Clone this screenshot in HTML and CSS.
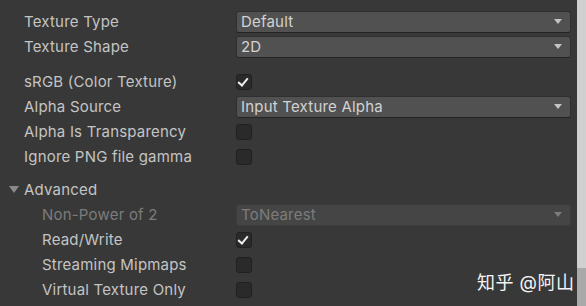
FILE: index.html
```html
<!DOCTYPE html>
<html lang="en">
<head>
    <meta charset="UTF-8">
    <meta name="viewport" content="width=device-width, initial-scale=1.0">
    <title>Texture Import Settings</title>
    <link rel="stylesheet" href="styles.css">
</head>
<body>
    <div class="inspector">
        <div class="row">
            <span class="label">Texture Type</span>
            <div class="popup"><span>Default</span><i class="arrow"></i></div>
        </div>
        <div class="row">
            <span class="label">Texture Shape</span>
            <div class="popup"><span>2D</span><i class="arrow"></i></div>
        </div>

        <div class="row spaced">
            <span class="label">sRGB (Color Texture)</span>
            <div class="toggle checked"></div>
        </div>
        <div class="row">
            <span class="label">Alpha Source</span>
            <div class="popup"><span>Input Texture Alpha</span><i class="arrow"></i></div>
        </div>
        <div class="row">
            <span class="label">Alpha Is Transparency</span>
            <div class="toggle"></div>
        </div>
        <div class="row">
            <span class="label">Ignore PNG file gamma</span>
            <div class="toggle"></div>
        </div>

        <div class="row foldout">
            <i class="fold-arrow"></i>
            <span class="label">Advanced</span>
        </div>
        <div class="row child disabled">
            <span class="label">Non-Power of 2</span>
            <div class="popup"><span>ToNearest</span><i class="arrow"></i></div>
        </div>
        <div class="row child">
            <span class="label">Read/Write</span>
            <div class="toggle checked"></div>
        </div>
        <div class="row child">
            <span class="label">Streaming Mipmaps</span>
            <div class="toggle"></div>
        </div>
        <div class="row child">
            <span class="label">Virtual Texture Only</span>
            <div class="toggle"></div>
        </div>
        <!-- next row is cut off by the window edge -->
        <div class="row child">
            <span class="label"></span>
            <div class="toggle"></div>
        </div>
    </div>

    <div class="scrollbar"><div class="thumb"></div></div>

    <div class="watermark">知乎 @阿山</div>
</body>
</html>
```

FILE: styles.css
```css
body {
    margin: 0;
    background-color: #383838;
    color: #c4c4c4;
    font-family: Inter, 'Noto Sans CJK SC', sans-serif;
    font-size: 15px;
    height: 306px;
    overflow: hidden;
    display: flex;
}

.inspector {
    flex: 1;
    padding: 9px 6px 0 0;
}

.row {
    display: flex;
    align-items: center;
    height: 25px;
}

.row.spaced {
    margin-top: 10px;
}

.row.foldout {
    margin-top: 8px;
}

.label {
    width: 212px;
    padding-left: 24px;
    white-space: nowrap;
    letter-spacing: 0.2px;
}

.row.child .label {
    width: 194px;
    padding-left: 42px;
}

.row.foldout .label {
    padding-left: 5px;
}

.fold-arrow {
    margin-left: 9px;
    width: 0;
    height: 0;
    border-left: 5px solid transparent;
    border-right: 5px solid transparent;
    border-top: 7px solid #8a8a8a;
}

.popup {
    flex: 1;
    height: 20px;
    display: flex;
    align-items: center;
    justify-content: space-between;
    padding: 0 8px 0 4px;
    background-color: #515151;
    border: 1px solid #303030;
    border-bottom-color: #242424;
    border-radius: 3px;
    color: #d2d2d2;
    letter-spacing: 0.2px;
}

.arrow {
    width: 0;
    height: 0;
    border-left: 4px solid transparent;
    border-right: 4px solid transparent;
    border-top: 5px solid #c4c4c4;
}

.toggle {
    width: 14px;
    height: 14px;
    background-color: #2a2a2a;
    border: 1px solid #202020;
    border-radius: 3px;
    position: relative;
}

.toggle.checked::after {
    content: "";
    position: absolute;
    left: 3px;
    top: 1px;
    width: 4px;
    height: 8px;
    border-right: 2px solid #eeeeee;
    border-bottom: 2px solid #eeeeee;
    transform: rotate(40deg);
}

.row.disabled .label {
    color: #7c7c7c;
}

.row.disabled .popup {
    background-color: #454545;
    border-color: #3d3d3d;
    color: #7c7c7c;
}

.row.disabled .arrow {
    border-top-color: #7c7c7c;
}

.scrollbar {
    width: 9px;
    background-color: #d0d0d0;
    display: flex;
    flex-direction: column;
    justify-content: flex-end;
}

.thumb {
    height: 38px;
    background-color: #a9a9a9;
}

.watermark {
    position: absolute;
    left: 477px;
    top: 268px;
    font-size: 18px;
    color: #f4f4f4;
    letter-spacing: 0.5px;
}
```
